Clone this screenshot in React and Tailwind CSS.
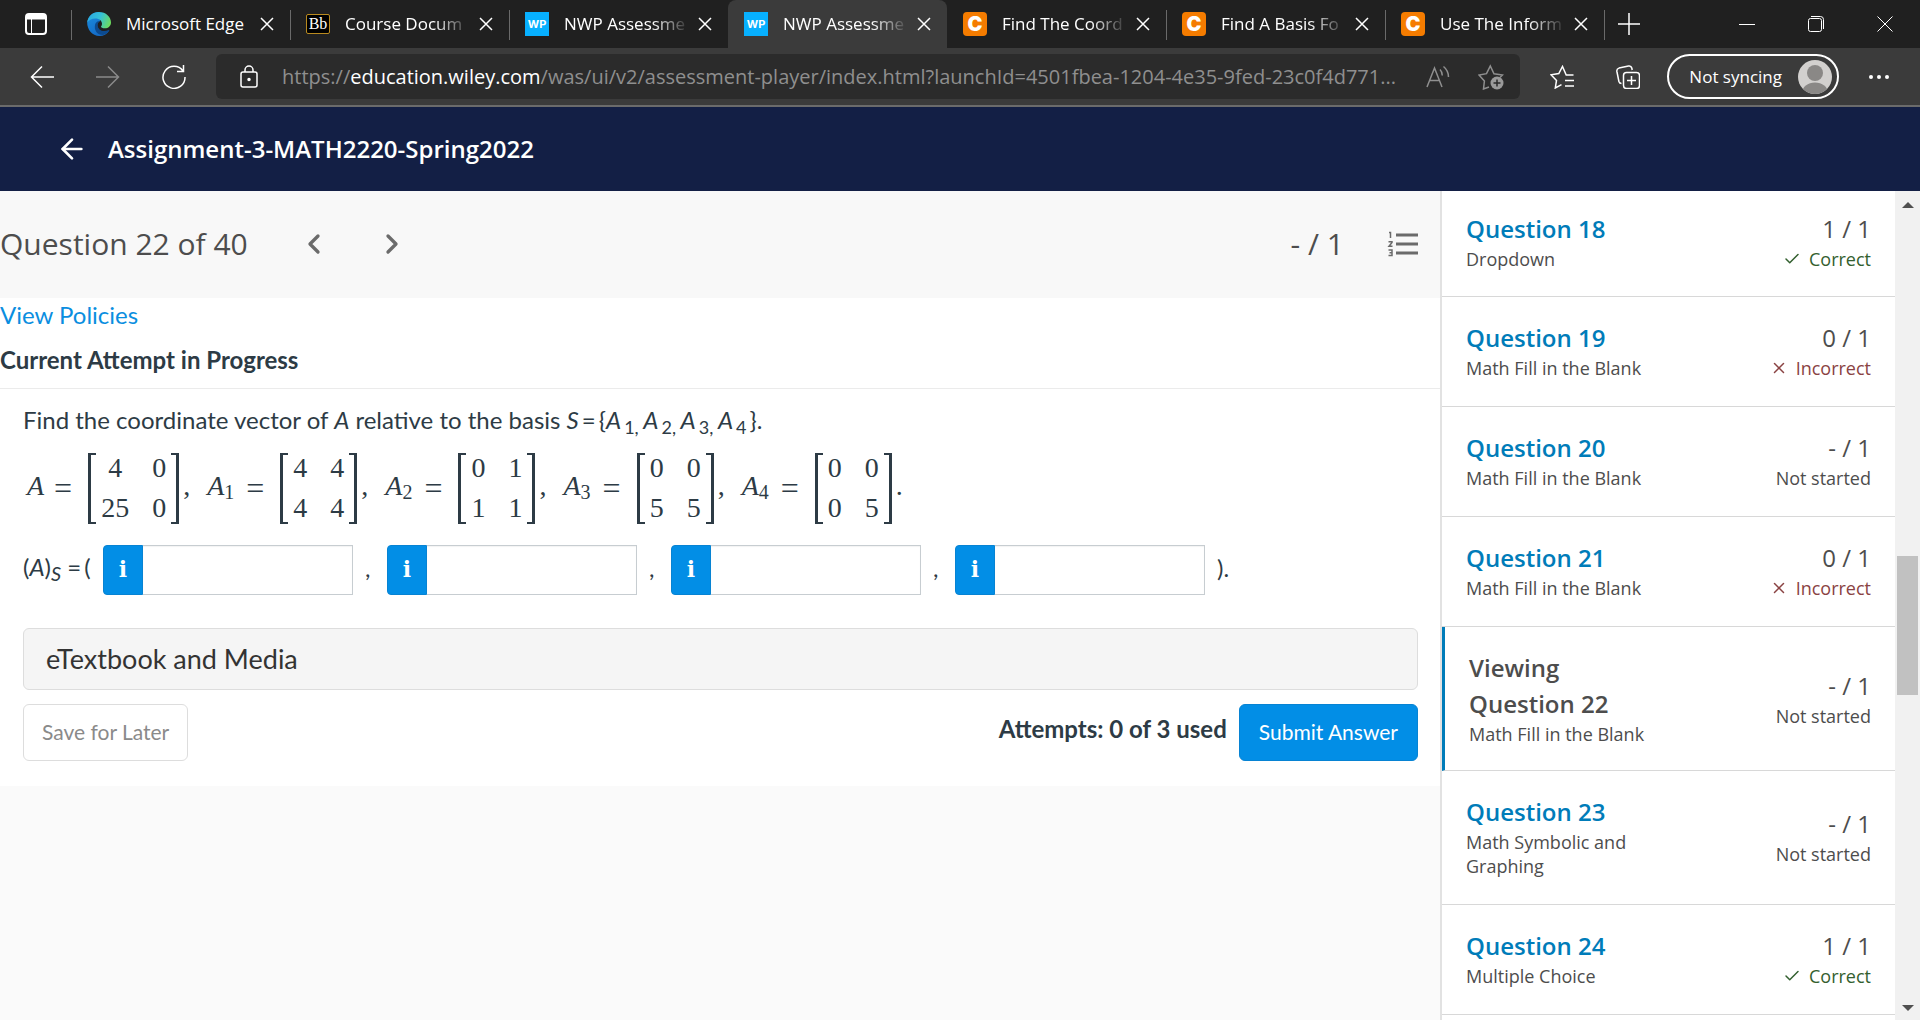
import React, { useState } from "react";
import { ArrowLeft, Check, ChevronLeft, ChevronRight, X } from "lucide-react";

const tabs = [
  { id: 1, title: "Microsoft Edge", icon: "edge" },
  { id: 2, title: "Course Docum", icon: "bb" },
  { id: 3, title: "NWP Assessme", icon: "wp" },
  { id: 4, title: "NWP Assessme", icon: "wp", active: true },
  { id: 5, title: "Find The Coord", icon: "chegg" },
  { id: 6, title: "Find A Basis Fo", icon: "chegg" },
  { id: 7, title: "Use The Inform", icon: "chegg" },
];

const questions = [
  { id: 18, type: "Dropdown", score: "1 / 1", status: "Correct" },
  { id: 19, type: "Math Fill in the Blank", score: "0 / 1", status: "Incorrect" },
  { id: 20, type: "Math Fill in the Blank", score: "- / 1", status: "Not started" },
  { id: 21, type: "Math Fill in the Blank", score: "0 / 1", status: "Incorrect" },
  { id: 22, type: "Math Fill in the Blank", score: "- / 1", status: "Not started", viewing: true },
  { id: 23, type: "Math Symbolic and Graphing", score: "- / 1", status: "Not started" },
  { id: 24, type: "Multiple Choice", score: "1 / 1", status: "Correct" },
];

const matrices = [
  { sub: "", cells: [4, 0, 25, 0], end: "," },
  { sub: "1", cells: [4, 4, 4, 4], end: "," },
  { sub: "2", cells: [0, 1, 1, 1], end: "," },
  { sub: "3", cells: [0, 0, 5, 5], end: "," },
  { sub: "4", cells: [0, 0, 0, 5], end: "." },
];

function EdgeLogo() {
  return (
    <svg viewBox="0 0 24 24" className="size-6">
      <defs>
        <linearGradient id="edgeTop" x1="0" y1="0.3" x2="1" y2="0.6">
          <stop offset="0" stopColor="#2aa9e0" />
          <stop offset="0.5" stopColor="#35c1d8" />
          <stop offset="1" stopColor="#6ddc5c" />
        </linearGradient>
        <linearGradient id="edgeSide" x1="0" y1="0" x2="0.6" y2="1">
          <stop offset="0" stopColor="#1b8fe0" />
          <stop offset="1" stopColor="#1368c4" />
        </linearGradient>
      </defs>
      <path d="M12 0C5.6 0 .8 4.7.2 10.5 0 17 5 24 12.5 24c4 0 7.5-2 9.5-5-4 2-9 1-11-3-2-4 .5-6 2-7z" fill="url(#edgeSide)" />
      <path d="M8 13c-1 5 2 10 8 10 3-1 5-2.5 6.300-4.500.3-.6-.2-.8-.7-.5-5 2.500-11 .5-11-5 0-2 1-3 2-4-2.500 0-4.300 2-4.600 4z" fill="#0c4a8f" />
      <path d="M.2 10.500C1 4 6 0 12 0c7 0 12 5 12 10.500 0 3.500-2.800 5.800-6 5.800-2.500 0-4-.8-4-1.600 0-.6 1-1 1-2.900C15 9 12.500 6.500 8.500 6.500 4.500 6.500 1.500 8.500.2 10.500z" fill="url(#edgeTop)" />
    </svg>
  );
}

function TabIcon({ name }) {
  if (name === "edge") return <EdgeLogo />;
  if (name === "bb")
    return (
      <span className="flex h-5 w-6 items-center justify-center rounded-[2px] border border-[#b98a1f] bg-black font-['Liberation_Serif',serif] text-base leading-none text-white">
        Bb
      </span>
    );
  if (name === "wp")
    return (
      <span className="flex size-6 items-center justify-center bg-[#07b0ff] font-['Inter',sans-serif] text-[11px] font-bold text-white">
        WP
      </span>
    );
  return (
    <span className="flex size-6 items-center justify-center rounded bg-[#f57c00] font-['Inter',sans-serif] text-xl leading-none font-black text-white">
      C
    </span>
  );
}

function TabBar() {
  return (
    <div className="flex h-12 shrink-0 bg-[#202020] text-white">
      <div className="flex w-[71px] shrink-0 items-center pl-[25px]">
        <button aria-label="Tab actions">
          <svg viewBox="0 0 22 22" className="size-[22px]" fill="none" stroke="#fff" strokeWidth="2">
            <rect x="1" y="1" width="20" height="20" rx="3" />
            <path d="M1 4h20" strokeWidth="5" />
            <path d="M6.500 6v15" strokeWidth="1" />
          </svg>
        </button>
      </div>
      {tabs.map((tab, i) => (
        <div
          key={tab.id}
          className={
            tab.active
              ? "flex w-[219px] min-w-0 items-center rounded-t-lg bg-[#3b3b3b] pr-4 pl-4"
              : "relative flex w-[219px] min-w-0 items-center pr-4 pl-4"
          }
        >
          {!tab.active && i !== 4 && (
            <span className="absolute top-2.5 left-0 h-[30px] w-px bg-[#6a6a6a]"></span>
          )}
          <span className="shrink-0">
            <TabIcon name={tab.icon} />
          </span>
          <span
            className={
              i === 0
                ? "ml-[15px] flex-1 whitespace-nowrap text-[17px]"
                : "ml-[15px] flex-1 mask-r-from-70% mask-r-to-100% whitespace-nowrap text-[17px]"
            }
          >
            {tab.title}
          </span>
          <button aria-label="Close tab" className="ml-2 shrink-0">
            <svg viewBox="0 0 14 14" className="size-[14px]" stroke="#fff" strokeWidth="1.500">
              <path d="M1 1l12 12M13 1L1 13" />
            </svg>
          </button>
        </div>
      ))}
      <div className="relative flex items-center pl-[14px]">
        <span className="absolute top-2.5 left-0 h-[30px] w-px bg-[#6a6a6a]"></span>
        <button aria-label="New tab">
          <svg viewBox="0 0 22 22" className="size-[22px]" stroke="#fff" strokeWidth="1.500">
            <path d="M11 0v22M0 11h22" />
          </svg>
        </button>
      </div>
      <div className="ml-auto flex shrink-0 items-center gap-[53px] pr-[27px]">
        <button aria-label="Minimize">
          <svg viewBox="0 0 16 16" className="size-4" stroke="#fff" fill="none">
            <path d="M0 8.500h16" />
          </svg>
        </button>
        <button aria-label="Restore">
          <svg viewBox="0 0 16 16" className="size-4" stroke="#fff" fill="none">
            <rect x="0.500" y="2.500" width="13" height="13" rx="2" />
            <path d="M3 .5h9.500a3 3 0 0 1 3 3V13" />
          </svg>
        </button>
        <button aria-label="Close window">
          <svg viewBox="0 0 16 16" className="size-4" stroke="#fff" fill="none">
            <path d="M.5.5l15 15M15.500.5l-15 15" />
          </svg>
        </button>
      </div>
    </div>
  );
}

function Toolbar() {
  return (
    <div className="flex h-[59px] shrink-0 items-center border-b-2 border-[#6b6b6b] bg-[#3b3b3b] pr-[31px] pl-[30px] text-white">
      <button aria-label="Back">
        <svg viewBox="0 0 24 24" className="size-6" fill="none" stroke="#fff" strokeWidth="1.500">
          <path d="M12 1.500L1.500 12 12 22.500M1.500 12H24" />
        </svg>
      </button>
      <button aria-label="Forward" className="ml-[42px]">
        <svg viewBox="0 0 24 24" className="size-6" fill="none" stroke="#8a8a8a" strokeWidth="1.500">
          <path d="M12 1.500L22.500 12 12 22.500M22.500 12H0" />
        </svg>
      </button>
      <button aria-label="Refresh" className="ml-[42px]">
        <svg viewBox="0 0 24 24" className="size-6" fill="none" stroke="#fff" strokeWidth="1.500">
          <path d="M21 6A11 11 0 1 0 23 12M21.500 0v6.500H15" />
        </svg>
      </button>
      <div className="ml-[30px] flex h-[45px] min-w-0 flex-1 items-center rounded-md bg-[#2b2b2b] pr-4 pl-6">
        <svg viewBox="0 0 18 23" className="h-[23px] w-[18px] shrink-0" fill="none" stroke="#fff" strokeWidth="1.500">
          <rect x="1" y="7" width="16" height="15" rx="2" />
          <path d="M5 7V5a4 4 0 0 1 8 0v2" />
          <circle cx="9" cy="14.500" r="1" fill="#fff" />
        </svg>
        <div role="textbox" aria-label="Address" className="ml-6 truncate text-[20px] text-[#8f8f8f]">
          https://<span className="text-white">education.wiley.com</span>
          /was/ui/v2/assessment-player/index.html?launchId=4501fbea-1204-4e35-9fed-23c0f4d771...
        </div>
        <button aria-label="Read aloud" className="ml-auto shrink-0">
          <svg viewBox="0 0 24 24" className="size-6" fill="none" stroke="#8f8f8f" strokeWidth="1.500">
            <path d="M1 22L8.500 3 16 22M4 15.500h9.500M14 4.500c1.500 1.500 2.300 3.500 2.300 6M17.500 1.500c3 2.500 5 6 5 10.500" />
          </svg>
        </button>
        <button aria-label="Add to favorites" className="ml-7 shrink-0">
          <svg viewBox="0 0 26 26" className="size-[26px]" fill="none" stroke="#8f8f8f" strokeWidth="1.500">
            <path d="M11 23l-5.500 2 .9-8L1 11l7.500-1.300L12.300 2l3.700 7.700 8.500 1.300-2.500 2.500" />
            <circle cx="19" cy="19" r="6.500" fill="#9a9a9a" stroke="none" />
            <path d="M19 15.500v7M15.500 19h7" stroke="#2b2b2b" />
          </svg>
        </button>
      </div>
      <button aria-label="Favorites" className="ml-[30px] shrink-0">
        <svg viewBox="0 0 24 24" className="size-6" fill="none" stroke="#fff" strokeWidth="1.500">
          <path d="M23.500 10h-7.300L12.500 1.500 8.800 8.600 1 9.800l5.500 5.600L5.300 23l6.200-3.300M15 15.500h9M15 21h9" />
        </svg>
      </button>
      <button aria-label="Collections" className="ml-[42px] shrink-0">
        <svg viewBox="0 0 24 24" className="size-6" fill="none" stroke="#fff" strokeWidth="1.500">
          <rect x="7.500" y="7.500" width="16" height="16" rx="3" />
          <path d="M15.500 11v9M11 15.500h9M5.500 18.500c-1.700 0-2.300-1-2.600-2L.9 6.500C.6 4.800 1.500 3.500 3 3.100L12.500 1c1.600-.3 2.900.5 3.300 2l.4 2" />
        </svg>
      </button>
      <button className="ml-[27px] flex h-[45px] shrink-0 items-center gap-4 rounded-full border-2 border-white pr-[5px] pl-5 text-[17px]">
        Not syncing
        <svg viewBox="0 0 34 34" className="size-[34px]">
          <defs>
            <clipPath id="avatar">
              <circle cx="17" cy="17" r="17" />
            </clipPath>
          </defs>
          <g clipPath="url(#avatar)">
            <rect width="34" height="34" fill="#d2d0ce" />
            <circle cx="17" cy="13" r="8" fill="#8a8886" />
            <ellipse cx="17" cy="33" rx="13" ry="10.500" fill="#8a8886" />
          </g>
        </svg>
      </button>
      <button aria-label="Settings and more" className="ml-[30px] shrink-0">
        <svg viewBox="0 0 20 4" className="h-1 w-5" fill="#fff">
          <circle cx="2" cy="2" r="2" />
          <circle cx="10" cy="2" r="2" />
          <circle cx="18" cy="2" r="2" />
        </svg>
      </button>
    </div>
  );
}

function Matrix({ sub, cells, end }) {
  return (
    <div className="flex items-center">
      <span className="pb-1">
        <i>A</i>
        {sub && <sub className="bottom-[-4px] text-[20px]">{sub}</sub>}
      </span>
      <span className={sub ? "ml-3 text-[32px]" : "ml-2.5 text-[32px]"}>=</span>
      <span className="ml-4 h-[71px] w-2 border-y-2 border-l-3 border-[#2d3b45]"></span>
      <div className="grid grid-cols-[auto_auto] gap-x-[23px] px-[5px] text-center leading-10">
        {cells.map((cell, i) => (
          <span key={i}>{cell}</span>
        ))}
      </div>
      <span className="h-[71px] w-2 border-y-2 border-r-3 border-[#2d3b45]"></span>
      <span className="ml-1 w-6 pb-1">{end}</span>
    </div>
  );
}

function AnswerBox({ index, value, onChange }) {
  return (
    <div className="flex h-[50px] w-[250px]">
      <button
        aria-label="Input help"
        className="w-10 shrink-0 rounded-l-sm border border-[#0783d3] bg-[#028ee6] pb-0.5 font-['DejaVu_Serif',serif] text-[22px] font-bold text-white"
      >
        i
      </button>
      <input
        type="text"
        aria-label={`Answer ${index + 1}`}
        value={value}
        onChange={(e) => onChange(e.target.value)}
        className="min-w-0 flex-1 border border-l-0 border-[#c7cdd1] px-2 inset-shadow-xs"
      />
    </div>
  );
}

function QuestionPanel() {
  const [answers, setAnswers] = useState(["", "", "", ""]);

  const updateAnswer = (index, value) => {
    setAnswers(answers.map((a, i) => (i === index ? value : a)));
  };

  return (
    <main className="min-w-0 flex-1 bg-[#fafafa]">
      <div className="flex h-[107px] items-center bg-[#f8f8f8] pr-[21px] pb-0.5 text-[30px] text-[#4d4d4d]">
        <h2>Question 22 of 40</h2>
        <button aria-label="Previous question" className="ml-[50px]">
          <ChevronLeft className="size-8" color="#6b6b6b" strokeWidth={2.5} />
        </button>
        <button aria-label="Next question" className="ml-[46px]">
          <ChevronRight className="size-8" color="#6b6b6b" strokeWidth={2.5} />
        </button>
        <span className="ml-auto">- / 1</span>
        <button aria-label="Question list" className="ml-[43px]">
          <svg viewBox="0 0 32 26" className="h-[26px] w-8" stroke="#6b6b6b" fill="none">
            <path d="M9 4h22M9 13h22M9 22h22" strokeWidth="3" />
            <path d="M2 1.500h1.500V7M1.500 10.700H5v.8l-3 3.800h3.500M1.500 19H5v5.500H1.500M2.500 21.700H5" strokeWidth="1.500" />
          </svg>
        </button>
      </div>

      <section className="bg-white pb-[25px] font-['Lato',sans-serif] text-[24px] text-[#2d3b45]">
        <div className="border-b border-[#ebebeb] pb-2.5">
          <a href="#policies" className="block leading-[34px] text-[#0a8ee0]">
            View Policies
          </a>
          <h3 className="pt-2.5 leading-9 font-bold">Current Attempt in Progress</h3>
        </div>

        <div className="pt-[13px] pr-[22px] pl-[23px]">
          <p className="leading-9">
            Find the coordinate vector of <i>A</i> relative to the basis <i>S</i>&thinsp;=&thinsp;{"{"}
            <i>A</i>&thinsp;<sub className="text-[18px]">1, </sub>
            <i>A</i>&thinsp;<sub className="text-[18px]">2, </sub>
            <i>A</i>&thinsp;<sub className="text-[18px]">3, </sub>
            <i>A</i>&thinsp;<sub className="text-[18px]">4</sub>
            &thinsp;{"}."}
          </p>

          <div className="mt-2.5 flex pl-1 font-['Liberation_Serif',serif] text-[28px]">
            {matrices.map((m, i) => (
              <Matrix key={i} {...m} />
            ))}
          </div>

          <div className="mt-[17px] flex items-center">
            <span className="w-20 pb-1.5 whitespace-nowrap">
              (<i>A</i>)<sub className="text-[20px] italic">S</sub> =&thinsp;(
            </span>
            {answers.map((value, i) => (
              <React.Fragment key={i}>
                <AnswerBox index={i} value={value} onChange={(v) => updateAnswer(i, v)} />
                {i < 3 ? <span className="w-[34px] pb-1 pl-3">,</span> : <span className="pb-1 pl-3">).</span>}
              </React.Fragment>
            ))}
          </div>

          <button className="mt-[33px] block h-[62px] w-full rounded-md border border-[#dddddd] bg-[#f5f5f5] px-[22px] text-left text-[27px] text-[#333333]">
            eTextbook and Media
          </button>

          <div className="mt-[14px] flex items-center">
            <button className="h-[57px] rounded-md border border-[#dddddd] bg-white px-[18px] pb-0.5 text-[21px] text-[#8a8a8a]">
              Save for Later
            </button>
            <span className="ml-auto pb-2 font-bold">Attempts: 0 of 3 used</span>
            <button className="ml-3 h-[57px] rounded-md border border-[#0783d3] bg-[#028ee6] px-[19px] pb-0.5 text-[21px] text-white">
              Submit Answer
            </button>
          </div>
        </div>
      </section>
    </main>
  );
}

function Status({ status }) {
  if (status === "Correct")
    return (
      <span className="flex items-center justify-end gap-2 text-[#33602f]">
        <Check className="size-[18px]" strokeWidth={2} />
        Correct
      </span>
    );
  if (status === "Incorrect")
    return (
      <span className="flex items-center justify-end gap-2 text-[#8a4343]">
        <X className="size-[18px]" strokeWidth={2} />
        Incorrect
      </span>
    );
  return <span className="block">{status}</span>;
}

function Sidebar() {
  return (
    <aside className="flex w-[480px] shrink-0 border-l-2 border-[#e2e2e2] bg-white">
      <ul className="min-w-0 flex-1 overflow-hidden text-[18px] leading-6 text-[#4d4d4d]">
        {questions.map((q) => (
          <li
            key={q.id}
            className={
              q.viewing
                ? "flex items-center justify-between border-b border-l-3 border-b-[#d8d8d8] border-l-[#007cb9] pt-[23px] pr-6 pb-6 pl-6"
                : "flex items-center justify-between border-b border-[#d8d8d8] pt-[23px] pr-6 pb-[26px] pl-6 first:pt-5 first:pb-[25px]"
            }
          >
            <div className="w-[190px]">
              {q.viewing ? (
                <h4 className="text-[24px] leading-9 font-semibold">
                  Viewing
                  <br />
                  Question {q.id}
                </h4>
              ) : (
                <a href={`#question-${q.id}`} className="block text-[24px] leading-9 font-semibold text-[#007cb9]">
                  Question {q.id}
                </a>
              )}
              <p>{q.type}</p>
            </div>
            <div className="text-right">
              <p className="text-[24px] leading-9">{q.score}</p>
              <Status status={q.status} />
            </div>
          </li>
        ))}
      </ul>
      <div className="flex w-[25px] shrink-0 flex-col items-center bg-[#f1f1f1] pt-2 pb-1.5">
        <svg viewBox="0 0 12 12" className="size-3" fill="#505050">
          <path d="M0 9l6-6 6 6z" />
        </svg>
        <div className="flex w-full flex-1 flex-col px-0.5">
          <div className="flex-[345]"></div>
          <div className="flex-[139] bg-[#c1c1c1]"></div>
          <div className="flex-[307]"></div>
        </div>
        <svg viewBox="0 0 12 12" className="size-3" fill="#505050">
          <path d="M0 3l6 6 6-6z" />
        </svg>
      </div>
    </aside>
  );
}

export default function App() {
  return (
    <div className="flex h-screen flex-col overflow-hidden font-['Open_Sans',sans-serif]">
      <TabBar />
      <Toolbar />
      <header className="flex h-[84px] shrink-0 items-center bg-[#131f45] pl-[56px] text-white">
        <button aria-label="Back to course">
          <ArrowLeft className="size-8" strokeWidth={2} />
        </button>
        <h1 className="ml-5 text-[24px] font-semibold">Assignment-3-MATH2220-Spring2022</h1>
      </header>
      <div className="flex min-h-0 flex-1">
        <QuestionPanel />
        <Sidebar />
      </div>
    </div>
  );
}
